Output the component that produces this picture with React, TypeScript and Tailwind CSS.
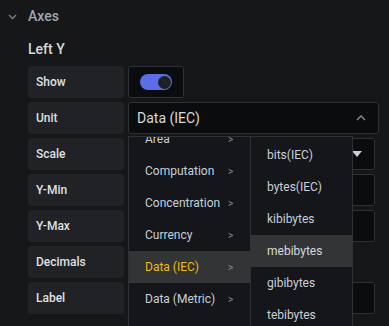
import React from "react";

const rows = ["Show", "Unit", "Scale", "Y-Min", "Y-Max", "Decimals", "Label"];

const categories = ["Area", "Computation", "Concentration", "Currency", "Data (IEC)", "Data (Metric)"];
const units = ["bits(IEC)", "bytes(IEC)", "kibibytes", "mebibytes", "gibibytes", "tebibytes"];

function Input({ width, caret }: { width: string; caret?: boolean }) {
    return (
        <div className={`${width} h-8 bg-[#0b0c0e] border border-[#2c3235] rounded-[3px] flex items-center justify-end pr-[12px]`}>
            {caret && (
                <svg width="10" height="6" viewBox="0 0 10 6">
                    <path d="M0 0 L10 0 L5 6 Z" fill="#c7d0d9" />
                </svg>
            )}
        </div>
    );
}

function Control({ name }: { name: string }) {
    if (name === "Show") {
        return (
            <div className="w-[56px] h-8 bg-[#0b0c0e] border border-[#2c3235] rounded-[3px] flex items-center pl-[11px]">
                <div className="w-8 h-4 rounded-full bg-[#5b6ee8] flex items-center justify-end pr-[1px]">
                    <div className="w-[13px] h-[13px] rounded-full bg-[#1f2023]" />
                </div>
            </div>
        );
    }
    if (name === "Unit") {
        return (
            <div className="w-[251px] h-8 bg-[#0b0c0e] border border-[#2c3235] rounded-[3px] flex items-center justify-between pl-[8px] pr-[12px]">
                <span className="text-[14px] text-[#d8d9da]">Data (IEC)</span>
                <svg width="10" height="6" viewBox="0 0 10 6">
                    <path d="M1 5 L5 1 L9 5" fill="none" stroke="#8e8e8e" strokeWidth="1.3" />
                </svg>
            </div>
        );
    }
    if (name === "Scale") return <Input width="w-[247px]" caret />;
    if (name === "Decimals") return <Input width="w-[200px]" />;
    return <Input width="w-[247px]" />;
}

export default function App() {
    return (
        <div className="relative w-[389px] h-[326px] overflow-hidden bg-[#161719] font-['Roboto',sans-serif]">
            <div className="flex items-center h-8 pl-[8px] pt-[1px]">
                <svg width="9" height="6" viewBox="0 0 9 6" className="mr-[11px]">
                    <path d="M1 1 L4.5 4.5 L8 1" fill="none" stroke="#7b8087" strokeWidth="1.3" />
                </svg>
                <span className="text-[14px] font-medium text-[#9fa7b3]">Axes</span>
            </div>

            <div className="pl-[28px] pt-[7px] text-[14px] font-medium text-[#d8d9da] leading-5">Left Y</div>

            <div className="flex flex-col gap-1 pl-[28px] pt-[7px]">
                {rows.map((r) => (
                    <div key={r} className="flex gap-1">
                        <div className="w-[96px] h-8 bg-[#202226] rounded-[3px] flex items-center px-2 text-[12px] font-medium text-[#dfe0e1]">
                            {r}
                        </div>
                        <Control name={r} />
                    </div>
                ))}
            </div>

            {/* unit picker menu */}
            <div className="absolute left-[128px] top-[136px] flex">
                <div className="w-[123px] h-[200px] bg-[#141619] border border-[#2c3235] overflow-hidden">
                    <div className="mt-[-14px]">
                        {categories.map((c) => (
                            <div
                                key={c}
                                className={`h-8 flex items-center pl-[16px] text-[12px] ${
                                    c === "Data (IEC)" ? "bg-[#333436] text-[#ecbb13]" : "text-[#c7d0d9]"
                                }`}
                            >
                                <span className="w-[83px]">{c}</span>
                                <span className="text-[10px] text-[#8e8e8e]">&gt;</span>
                            </div>
                        ))}
                    </div>
                </div>
                <div className="w-[102px] h-[200px] bg-[#141619] border border-l-0 border-[#2c3235] pt-[2px] overflow-hidden">
                    {units.map((u) => (
                        <div
                            key={u}
                            className={`h-8 flex items-center pl-[16px] text-[12px] ${
                                u === "mebibytes" ? "bg-[#333436] text-[#d8d9da]" : "text-[#c7d0d9]"
                            }`}
                        >
                            {u}
                        </div>
                    ))}
                </div>
            </div>
        </div>
    );
}
